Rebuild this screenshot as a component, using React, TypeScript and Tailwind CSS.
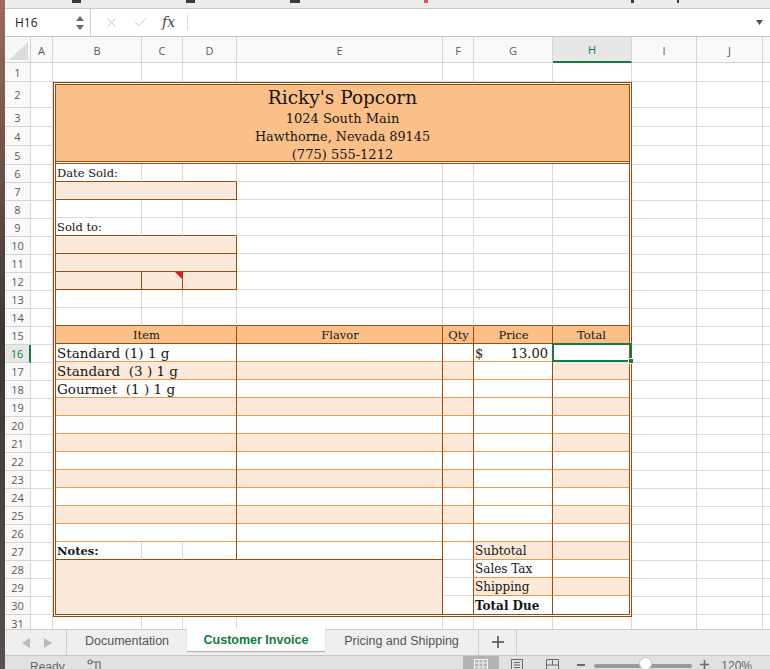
import React from 'react';
import { X, Check } from 'lucide-react';

const SERIF = "font-['DejaVu_Serif','Liberation_Serif',serif]";
const UI = "font-['Open_Sans','Noto_Sans',sans-serif]";
const UI2 = "font-['Liberation_Sans',Arial,sans-serif]";

const COLS = ['A', 'B', 'C', 'D', 'E', 'F', 'G', 'H', 'I', 'J', 'K'];
const ROWS = Array.from({ length: 31 }, (_, i) => i + 1);

// cell border presets
const GRAY = 'border-r border-b border-[#d9d9d9]';
const GRAY_END = 'border-b border-[#d9d9d9]';
const GRAY_OVER_BROWN = 'border-r border-b border-r-[#d9d9d9] border-b-[#9c4a0e]';
const BOX = 'bg-[#fde9d9] border-r border-b border-[#9c4a0e]';
const HEAD = 'bg-[#fbbf88] border-r border-b border-[#9c4a0e] justify-center pl-0';
const BODY = 'border-r border-b border-r-[#9c4a0e] border-b-[#f29b4b]';
const BODY_FILL = 'bg-[#fde9d9] border-r border-b border-r-[#9c4a0e] border-b-[#f29b4b]';
const F_COL = 'border-r border-b border-r-[#9c4a0e] border-b-[#d9d9d9]';

function C({ cls = '', children }: { cls?: string; children?: React.ReactNode }) {
  return (
    <div className={`relative flex items-end overflow-visible whitespace-pre pl-px leading-[15px] ${cls}`}>
      {children}
    </div>
  );
}

function GrayRow({ label, brownBelow = false }: { label?: string; brownBelow?: boolean }) {
  const b = brownBelow ? GRAY_OVER_BROWN : GRAY;
  return (
    <>
      <C cls={`${b} text-[11.5px]`}>{label}</C>
      <C cls={b} />
      <C cls={b} />
      <C cls={GRAY} />
      <C cls={GRAY} />
      <C cls={GRAY} />
      <C cls={GRAY_END} />
    </>
  );
}

function FilledRow() {
  return (
    <>
      <C cls={`${BOX} col-span-3`} />
      <C cls={GRAY} />
      <C cls={GRAY} />
      <C cls={GRAY} />
      <C cls={GRAY_END} />
    </>
  );
}

const items: Record<number, string> = {
  16: 'Standard (1) 1 g',
  17: 'Standard  (3 ) 1 g',
  18: 'Gourmet  (1 ) 1 g',
};

function Invoice() {
  const body = [16, 17, 18, 19, 20, 21, 22, 23, 24, 25, 26];
  return (
    <div
      className={`col-start-3 col-span-7 row-start-3 row-span-29 self-start relative z-10 bg-white border-[3px] border-double border-[#9c4a0e] text-[#161616] ${SERIF}`}
    >
      <div className="h-[77px] bg-[#fbbf88] border-b border-[#9c4a0e] flex flex-col items-center">
        <div className="h-[24px] leading-[26px] text-[18.5px]">Ricky's Popcorn</div>
        <div className="h-[18px] leading-[19px] text-[13px]">1024 South Main</div>
        <div className="h-[18px] leading-[19px] text-[12.8px]">Hawthorne, Nevada 89145</div>
        <div className="h-[18px] leading-[19px] text-[13px]">(775) 555-1212</div>
      </div>
      <div className="h-px" />
      <div className="border-t border-[#9c4a0e] grid grid-cols-[86px_41px_54px_206px_31px_79px_76px] grid-rows-[repeat(25,18px)]">
        {/* rows 6 - 14 */}
        <GrayRow label="Date Sold:" brownBelow />
        <FilledRow />
        <GrayRow />
        <GrayRow label="Sold to:" brownBelow />
        <FilledRow />
        <FilledRow />
        <C cls={BOX} />
        <C cls={BOX}>
          <svg className="absolute top-0 right-0" width="7" height="7" viewBox="0 0 7 7">
            <polygon points="0,0 7,0 7,7" fill="#e81123" />
          </svg>
        </C>
        <C cls={BOX} />
        <C cls={GRAY} />
        <C cls={GRAY} />
        <C cls={GRAY} />
        <C cls={GRAY_END} />
        <GrayRow />
        <C cls={GRAY_OVER_BROWN} />
        <C cls={GRAY_OVER_BROWN} />
        <C cls={GRAY_OVER_BROWN} />
        <C cls={GRAY_OVER_BROWN} />
        <C cls={GRAY_OVER_BROWN} />
        <C cls={GRAY_OVER_BROWN} />
        <C cls="border-b border-[#9c4a0e]" />

        {/* row 15 header */}
        <C cls={`${HEAD} col-span-3 text-[11.5px]`}>Item</C>
        <C cls={`${HEAD} text-[11.5px]`}>Flavor</C>
        <C cls={`${HEAD} text-[11.5px]`}>Qty</C>
        <C cls={`${HEAD} text-[11.5px]`}>Price</C>
        <C cls="bg-[#fbbf88] border-b border-[#9c4a0e] justify-center pl-0 text-[11.5px]">Total</C>

        {/* rows 16 - 26 */}
        {body.map((r) => {
          const light = r % 2 === 1;
          return (
            <React.Fragment key={r}>
              <C cls={`${light ? BODY_FILL : BODY} col-span-3 text-[13.5px]`}>{items[r]}</C>
              <C cls={light ? BODY_FILL : BODY} />
              <C cls={light ? BODY_FILL : BODY} />
              <C cls={`${BODY} justify-between pr-[4px] pl-[8px] text-[13px]`}>
                {r === 16 && (
                  <>
                    <span>$</span>
                    <span>13.00</span>
                  </>
                )}
              </C>
              <C cls={`${light ? 'bg-[#fde9d9]' : ''} border-b border-[#f29b4b]`}>
                {r === 16 && (
                  <div className="absolute -left-px -top-px -right-[3px] -bottom-px border-2 border-[#137a43] z-20">
                    <div className="absolute -right-[4px] -bottom-[4px] w-[6px] h-[6px] bg-[#137a43] border border-white" />
                  </div>
                )}
              </C>
            </React.Fragment>
          );
        })}

        {/* row 27 */}
        <C cls={`${GRAY_OVER_BROWN} text-[11.5px] font-bold`}>Notes:</C>
        <C cls={GRAY_OVER_BROWN} />
        <C cls="border-r border-b border-[#9c4a0e]" />
        <C cls="border-r border-b border-[#9c4a0e]" />
        <C cls={F_COL} />
        <C cls={`${BODY_FILL} text-[12px] pl-[2px]`}>Subtotal</C>
        <C cls="bg-[#fde9d9] border-b border-[#f29b4b]" />

        {/* rows 28 - 30 */}
        <C cls="col-span-4 row-span-3 bg-[#fde9d9] border-r border-[#9c4a0e]" />
        <C cls={F_COL} />
        <C cls={`${BODY} text-[12px] pl-[2px]`}>Sales Tax</C>
        <C cls="border-b border-[#f29b4b]" />
        <C cls={F_COL} />
        <C cls={`${BODY_FILL} text-[12px] pl-[2px]`}>Shipping</C>
        <C cls="bg-[#fde9d9] border-b border-[#f29b4b]" />
        <C cls="border-r border-[#9c4a0e]" />
        <C cls="border-r border-[#9c4a0e] text-[12px] pl-[2px] font-bold">Total Due</C>
        <C />
      </div>
    </div>
  );
}

function Sheet() {
  const cells: React.ReactNode[] = [];
  cells.push(
    <div key="corner" className="relative border-r border-b border-[#d4d4d4] bg-[#f8f8f8]">
      <svg className="absolute left-[4px] top-[5px]" width="19" height="18" viewBox="0 0 19 18">
        <polygon points="0,18 19,0 19,18" fill="#dcdcdc" />
      </svg>
    </div>
  );
  COLS.forEach((c) =>
    cells.push(
      <div
        key={'h' + c}
        className={
          c === 'H'
            ? 'flex items-center justify-center pt-[3px] text-[11px] text-[#107c41] border-r border-r-[#d4d4d4] border-b-2 border-b-[#107c41] bg-[#e7e7e7]'
            : 'flex items-center justify-center pt-[3px] text-[11px] text-[#5b5b5b] border-r border-b border-[#d4d4d4] bg-[#f9f9f9]'
        }
      >
        {c === 'K' ? '' : c}
      </div>
    )
  );
  ROWS.forEach((r) => {
    cells.push(
      <div
        key={'r' + r}
        className={
          r === 16
            ? 'flex items-center justify-center pt-[2px] text-[11px] text-[#107c41] border-b border-b-[#d4d4d4] border-r-2 border-r-[#107c41] bg-[#e7e7e7]'
            : 'flex items-center justify-center pt-[2px] text-[11px] text-[#5b5b5b] border-r border-b border-[#d4d4d4] bg-[#f9f9f9]'
        }
      >
        {r}
      </div>
    );
    COLS.forEach((c, ci) => {
      if (r >= 2 && r <= 30 && ci >= 1 && ci <= 7) return;
      cells.push(<div key={c + r} className="border-r border-b border-[#dadada] bg-white" />);
    });
  });

  return (
    <div className={`h-[592px] shrink-0 overflow-hidden ${UI}`}>
      <div className="grid w-max grid-cols-[26px_22px_89px_41px_54px_206px_31px_79px_79px_65px_66px_80px] grid-rows-[26px_19px_26px_19px_19px_19px_repeat(26,18px)]">
        {cells}
        <Invoice />
      </div>
    </div>
  );
}

function FormulaBar() {
  return (
    <div className={`h-[28px] shrink-0 flex items-stretch border-b border-[#c4c4c4] bg-white ${UI}`}>
      <div className="w-[86px] border-r border-[#d2d2d2] flex items-center justify-between pl-[10px] pr-[6px]">
        <span className="text-[12px] text-[#222]">H16</span>
        <svg width="8" height="16" viewBox="0 0 8 16">
          <polygon points="4,1 8,6 0,6" fill="#6a6a6a" />
          <polygon points="0,10 8,10 4,15" fill="#6a6a6a" />
        </svg>
      </div>
      <div className="flex items-center pl-[13px] gap-[14px]">
        <X size={15} strokeWidth={1.6} className="text-[#c4c4c4]" />
        <Check size={15} strokeWidth={1.6} className="text-[#c4c4c4]" />
        <span className={`italic text-[14px] text-[#444] ${SERIF}`}>fx</span>
        <div className="w-px h-[15px] bg-[#dcdcdc] -ml-[2px]" />
      </div>
      <div className="flex-1" />
      <div className="w-[14px] flex items-center">
        <svg width="7" height="5" viewBox="0 0 7 5">
          <polygon points="0,0 7,0 3.5,5" fill="#555" />
        </svg>
      </div>
    </div>
  );
}

function Toolbar() {
  return (
    <div className="relative h-[9px] shrink-0 bg-[#ececec] border-b border-[#c9c9c9]">
      <div className="absolute left-[67px] top-0 w-[9px] h-[3px] bg-[#3a3a3a]" />
      <div className="absolute left-[181px] top-0 w-[9px] h-[3px] bg-[#3a3a3a]" />
      <div className="absolute left-[285px] top-0 w-[10px] h-[3px] bg-[#3a3a3a]" />
      <div className="absolute left-[419px] top-0 w-[4px] h-[3px] bg-[#f05050]" />
      <div className="absolute left-[626px] top-0 w-[3px] h-[3px] bg-[#3a3a3a]" />
      <div className="absolute left-[672px] top-0 w-[2px] h-[3px] bg-[#3a3a3a]" />
    </div>
  );
}

function Tabs() {
  return (
    <div className={`h-[26px] shrink-0 flex items-stretch bg-[#efefef] border-t border-[#cdcdcd] text-[12.5px] ${UI2}`}>
      <div className="w-[61px] flex items-center justify-center gap-[14px] pl-[2px]">
        <svg width="8" height="10" viewBox="0 0 8 10">
          <polygon points="8,0 8,10 0,5" fill="#b9b9b9" />
        </svg>
        <svg width="8" height="10" viewBox="0 0 8 10">
          <polygon points="0,0 0,10 8,5" fill="#b9b9b9" />
        </svg>
      </div>
      <div className="w-[121px] border-l border-[#d0d0d0] flex items-center justify-center text-[#555] pb-[3px]">
        Documentation
      </div>
      <div className="w-[138px] bg-white -mt-px mb-[4px] shadow-[0_1px_1px_rgba(0,0,0,0.25)] flex items-center justify-center text-[#0f7b3f] font-bold">
        Customer Invoice
      </div>
      <div className="w-[154px] border-r border-[#d0d0d0] flex items-center justify-center text-[#555] pb-[3px]">
        Pricing and Shipping
      </div>
      <div className="w-[38px] border-r border-[#d0d0d0] flex items-center justify-center text-[#555] pb-[2px]">
        <svg width="12" height="12" viewBox="0 0 12 12">
          <rect x="5.2" y="0" width="1.6" height="12" fill="#555" />
          <rect x="0" y="5.2" width="12" height="1.6" fill="#555" />
        </svg>
      </div>
    </div>
  );
}

function StatusBar() {
  return (
    <div className={`h-[22px] shrink-0 flex items-stretch bg-[#e1e1e1] border-t border-[#c6c6c6] text-[12px] text-[#666] ${UI2}`}>
      <span className="pl-[25px] pt-[4px] leading-[14px]">Ready</span>
      <div className="ml-[22px] pt-[3px]">
        <svg width="15" height="14" viewBox="0 0 15 14">
          <circle cx="3" cy="3" r="2" fill="none" stroke="#6a6a6a" strokeWidth="1.2" />
          <path d="M5 3 H13 V14 M9 3 V14" fill="none" stroke="#6a6a6a" strokeWidth="1.2" />
        </svg>
      </div>
      <div className="ml-auto flex items-stretch pr-[18px]">
        <div className="w-[36px] bg-[#b4b4b4] flex justify-center pt-[3px]">
          <svg width="14" height="12" viewBox="0 0 14 12">
            <rect x="0.5" y="0.5" width="13" height="11" fill="none" stroke="#f3f3f3" />
            <path d="M5 0 V12 M9 0 V12 M0 4 H14 M0 8 H14" stroke="#f3f3f3" />
          </svg>
        </div>
        <div className="w-[35px] flex justify-center pt-[3px]">
          <svg width="12" height="12" viewBox="0 0 12 12">
            <rect x="0.5" y="0.5" width="11" height="11" fill="none" stroke="#6a6a6a" />
            <path d="M3 3.5 H9 M3 6 H9 M3 8.5 H9" stroke="#6a6a6a" />
          </svg>
        </div>
        <div className="w-[36px] flex justify-center pt-[3px]">
          <svg width="13" height="12" viewBox="0 0 13 12">
            <path d="M0.5 12 V0.5 H12.5 V12 M6.5 0.5 V6 M0.5 6 H12.5" fill="none" stroke="#6a6a6a" />
          </svg>
        </div>
        <div className="ml-[6px] w-[10px] flex justify-center pt-[8px]">
          <div className="w-[8px] h-[2px] bg-[#6a6a6a]" />
        </div>
        <div className="ml-[8px] w-[98px] relative">
          <div className="mt-[8px] h-[4px] rounded-full bg-[#9a9a9a]" />
          <div className="absolute left-[45px] top-[1px] w-[13px] h-[13px] rounded-full bg-white border border-[#c2c2c2]" />
        </div>
        <div className="ml-[7px] w-[10px] flex justify-center pt-[4px]">
          <svg width="9" height="9" viewBox="0 0 9 9">
            <rect x="3.7" y="0" width="1.6" height="9" fill="#6a6a6a" />
            <rect x="0" y="3.7" width="9" height="1.6" fill="#6a6a6a" />
          </svg>
        </div>
        <span className="ml-[12px] pt-[3px] leading-[14px]">120%</span>
      </div>
    </div>
  );
}

export default function App() {
  return (
    <div className="w-[770px] h-[669px] overflow-hidden flex bg-white">
      <div className="w-[5px] h-full shrink-0 bg-linear-to-b from-[#a0695c] via-[#3e3633] to-[#57504d]" />
      <div className="flex-1 min-w-0 flex flex-col overflow-hidden">
        <Toolbar />
        <FormulaBar />
        <Sheet />
        <Tabs />
        <StatusBar />
      </div>
    </div>
  );
}
